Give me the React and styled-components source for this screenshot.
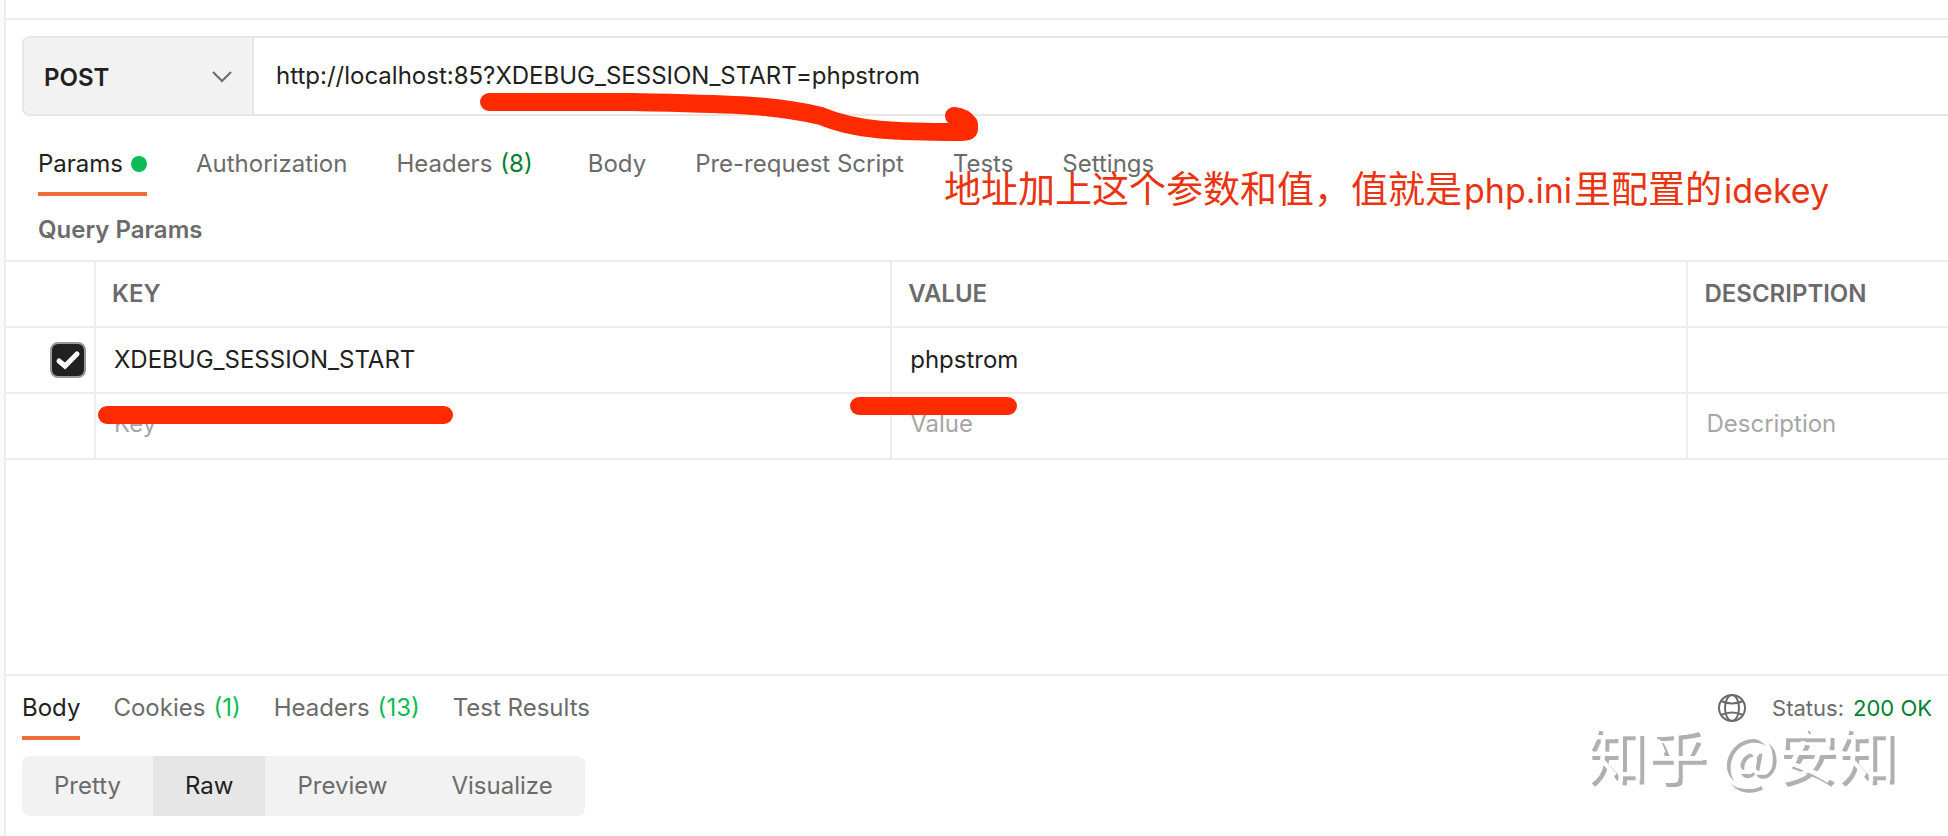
import React, { useState } from "react";
import styled, { createGlobalStyle } from "styled-components";

const GlobalStyle = createGlobalStyle`
  *, *::before, *::after { box-sizing: border-box; }
  body {
    margin: 0;
    background: #fff;
    color: #212121;
    font-family: Inter, "Noto Sans CJK SC", sans-serif;
    font-size: 24px;
    line-height: 32px;
    overflow-x: hidden;
  }
  button, input, select { font: inherit; color: inherit; margin: 0; }
`;

const Page = styled.div`
  display: flex;
  min-height: 100vh;
  background: #fafafa;
  padding-left: 4px;
`;

const Workspace = styled.main`
  position: relative;
  flex: 1;
  min-width: 0;
  display: flex;
  flex-direction: column;
  border-left: 2px solid #ededed;
  background: #fff;
`;

const TopStrip = styled.div`
  height: 20px;
  border-bottom: 2px solid #ededed;
`;

const UrlBar = styled.form`
  display: flex;
  height: 80px;
  margin: 16px 0 0 16px;
  border: 2px solid #e6e6e6;
  border-right: 0;
  border-radius: 8px 0 0 8px;
  overflow: hidden;
`;

const MethodBox = styled.label`
  display: flex;
  align-items: center;
  width: 230px;
  padding: 0 20px;
  border-right: 2px solid #e6e6e6;
  background: #f2f2f2;
`;

const MethodSelect = styled.select`
  flex: 1;
  appearance: none;
  border: 0;
  padding: 4px 0 0;
  background: transparent;
  font-weight: 600;
  outline: none;
`;

const Chevron = styled.svg`
  width: 20px;
  height: 20px;
  fill: none;
  stroke: #6b6b6b;
  stroke-width: 2;
`;

const UrlInput = styled.input`
  flex: 1;
  min-width: 0;
  border: 0;
  padding: 0 22px;
  background: transparent;
  outline: none;
`;

const Tabs = styled.nav`
  display: flex;
  gap: ${(p) => p.$gap}px;
`;

const RequestTabs = styled(Tabs)`
  margin: 32px 0 0 32px;
`;

const Tab = styled.button`
  display: flex;
  align-items: center;
  gap: 8px;
  height: 48px;
  padding: 0 0 12px;
  border: 0;
  border-bottom: 4px solid ${(p) => (p.$active ? "#f26b3a" : "transparent")};
  background: none;
  color: ${(p) => (p.$active ? "#212121" : "#6b6b6b")};
  white-space: nowrap;
`;

const Dot = styled.span`
  width: 16px;
  height: 16px;
  border-radius: 50%;
  background: #0cbb52;
`;

const Count = styled.span`
  color: #007f31;
  padding-right: 6px;
`;

const ResponseCount = styled.span`
  color: #0cbb52;
`;

const SectionTitle = styled.h2`
  margin: 18px 0 14px 32px;
  font-size: 24px;
  line-height: 32px;
  font-weight: 600;
  color: #6b6b6b;
`;

const ParamsTable = styled.table`
  width: 100%;
  table-layout: fixed;
  border-collapse: separate;
  border-spacing: 0;
  border-top: 2px solid #ededed;
`;

const Column = styled.col`
  width: ${(p) => p.$width};
`;

const Cell = styled.td`
  height: 66px;
  padding: 0 0 ${(p) => (p.$blank ? 4 : 0)}px 18px;
  border-bottom: 2px solid #ededed;
  border-left: 2px solid #ededed;
  text-align: left;
  &:first-child { border-left: 0; padding: 0 8px 0 0; text-align: right; }
`;

const HeadCell = styled(Cell).attrs({ as: "th" })`
  padding-left: 16px;
  font-weight: 600;
  color: #6b6b6b;
`;

const CellInput = styled.input`
  display: block;
  width: 100%;
  border: 0;
  padding: 0;
  background: transparent;
  outline: none;
  &::placeholder { color: #a6a6a6; opacity: 1; }
`;

const CheckLabel = styled.label`
  display: inline-grid;
  vertical-align: middle;
  & > * { grid-area: 1 / 1; }
`;

const CheckInput = styled.input`
  appearance: none;
  width: 36px;
  height: 36px;
  border: 2px solid #999;
  border-radius: 8px;
  background: #fff;
  &:checked { background: #212121; }
`;

const CheckMark = styled.svg`
  width: 36px;
  height: 36px;
  pointer-events: none;
  fill: none;
  stroke: #fff;
  stroke-width: 5;
  stroke-linecap: round;
  stroke-linejoin: miter;
`;

const Response = styled.section`
  margin-top: 214px;
  border-top: 2px solid #ededed;
  padding: 16px 16px 20px;
`;

const ResponseHead = styled.div`
  display: flex;
  justify-content: space-between;
  align-items: flex-start;
`;

const Status = styled.div`
  display: flex;
  align-items: center;
  height: 32px;
  font-size: 22px;
  color: #6b6b6b;
`;

const Globe = styled.svg`
  width: 32px;
  height: 32px;
  margin-right: 24px;
  fill: none;
  stroke: #6b6b6b;
  stroke-width: 2;
`;

const StatusCode = styled.span`
  margin-left: 9px;
  color: #007f31;
`;

const ViewModes = styled.div`
  display: inline-flex;
  margin-top: 16px;
  border-radius: 8px;
  background: #f2f2f2;
  overflow: hidden;
`;

const ModeButton = styled.button`
  height: 60px;
  padding: 0 32px;
  border: 0;
  background: ${(p) => (p.$active ? "#e6e6e6" : "transparent")};
  color: ${(p) => (p.$active ? "#212121" : "#6b6b6b")};
`;

const Markup = styled.svg`
  position: absolute;
  left: 0;
  top: 0;
  width: 1100px;
  height: 460px;
  pointer-events: none;
  fill: none;
  stroke: #ff2a00;
  stroke-width: 18;
  stroke-linecap: round;
  stroke-linejoin: round;
`;

const Note = styled.p`
  position: absolute;
  left: 938px;
  top: 166px;
  display: flex;
  align-items: baseline;
  gap: 2px;
  margin: 0;
  font-size: 37px;
  line-height: 48px;
  color: #ea3311;
  white-space: nowrap;
  pointer-events: none;
`;

const NoteLatin = styled.span`
  font-size: 34px;
`;

const Watermark = styled.div`
  position: absolute;
  right: 52px;
  bottom: 54px;
  font-family: "Noto Sans CJK SC", sans-serif;
  font-size: 60px;
  line-height: 60px;
  color: #fff;
  text-shadow: 4px 4px 0 #b0b0b0;
  pointer-events: none;
`;

const requestTabs = [
  { label: "Params", dot: true },
  { label: "Authorization" },
  { label: "Headers", count: 8 },
  { label: "Body" },
  { label: "Pre-request Script" },
  { label: "Tests" },
  { label: "Settings" },
];

const responseTabs = [
  { label: "Body" },
  { label: "Cookies", count: 1 },
  { label: "Headers", count: 13 },
  { label: "Test Results" },
];

const modes = ["Pretty", "Raw", "Preview", "Visualize"];

export default function App() {
  const [tab, setTab] = useState("Params");
  const [resTab, setResTab] = useState("Body");
  const [mode, setMode] = useState("Raw");

  return (
    <Page>
      <GlobalStyle />
      <Workspace>
        <TopStrip />
        <UrlBar onSubmit={(e) => e.preventDefault()}>
          <MethodBox>
            <MethodSelect aria-label="Method" defaultValue="POST">
              <option>POST</option>
            </MethodSelect>
            <Chevron viewBox="0 0 20 20"><path d="M1 6l9 9 9-9" /></Chevron>
          </MethodBox>
          <UrlInput
            aria-label="Request URL"
            defaultValue="http://localhost:85?XDEBUG_SESSION_START=phpstrom"
          />
        </UrlBar>

        <RequestTabs $gap={49}>
          {requestTabs.map((t) => (
            <Tab key={t.label} type="button" $active={t.label === tab} onClick={() => setTab(t.label)}>
              {t.label}
              {t.dot && <Dot />}
              {t.count && <Count>({t.count})</Count>}
            </Tab>
          ))}
        </RequestTabs>

        <SectionTitle>Query Params</SectionTitle>
        <ParamsTable>
          <colgroup>
            <Column $width="88px" />
            <Column $width="41%" />
            <Column $width="41%" />
            <Column $width="auto" />
          </colgroup>
          <thead>
            <tr>
              <HeadCell />
              <HeadCell>KEY</HeadCell>
              <HeadCell>VALUE</HeadCell>
              <HeadCell>DESCRIPTION</HeadCell>
            </tr>
          </thead>
          <tbody>
            <tr>
              <Cell>
                <CheckLabel>
                  <CheckInput type="checkbox" defaultChecked aria-label="Enable parameter" />
                  <CheckMark viewBox="0 0 36 36"><path d="M9 19l6 5L27 12" /></CheckMark>
                </CheckLabel>
              </Cell>
              <Cell><CellInput aria-label="Key" defaultValue="XDEBUG_SESSION_START" /></Cell>
              <Cell><CellInput aria-label="Value" defaultValue="phpstrom" /></Cell>
              <Cell><CellInput aria-label="Description" /></Cell>
            </tr>
            <tr>
              <Cell />
              <Cell $blank><CellInput aria-label="New key" placeholder="Key" /></Cell>
              <Cell $blank><CellInput aria-label="New value" placeholder="Value" /></Cell>
              <Cell $blank><CellInput aria-label="New description" placeholder="Description" /></Cell>
            </tr>
          </tbody>
        </ParamsTable>

        <Response>
          <ResponseHead>
            <Tabs $gap={33}>
              {responseTabs.map((t) => (
                <Tab key={t.label} type="button" $active={t.label === resTab} onClick={() => setResTab(t.label)}>
                  {t.label}
                  {t.count && <ResponseCount>({t.count})</ResponseCount>}
                </Tab>
              ))}
            </Tabs>
            <Status>
              <Globe viewBox="0 0 32 32">
                <circle cx="16" cy="16" r="13" />
                <ellipse cx="16" cy="16" rx="7" ry="13" />
                <path d="M5 9Q16 14 27 9M5 23Q16 18 27 23" />
              </Globe>
              Status:<StatusCode>200 OK</StatusCode>
            </Status>
          </ResponseHead>
          <ViewModes>
            {modes.map((m) => (
              <ModeButton key={m} type="button" $active={m === mode} onClick={() => setMode(m)}>{m}</ModeButton>
            ))}
          </ViewModes>
        </Response>

        <Markup viewBox="0 0 1100 460">
          <path d="M483 102H626C720 104 765 104 815 116C850 131 890 132 956 132Q963 132 963 129V124Q958 117 948 116" />
          <path d="M101 415H438" />
          <path d="M853 406H1002" />
        </Markup>
        <Note>
          <span>地址加上这个参数和值，值就是</span>
          <NoteLatin>php.ini</NoteLatin>
          <span>里配置的</span>
          <NoteLatin>idekey</NoteLatin>
        </Note>
        <Watermark>知乎 @安知</Watermark>
      </Workspace>
    </Page>
  );
}
